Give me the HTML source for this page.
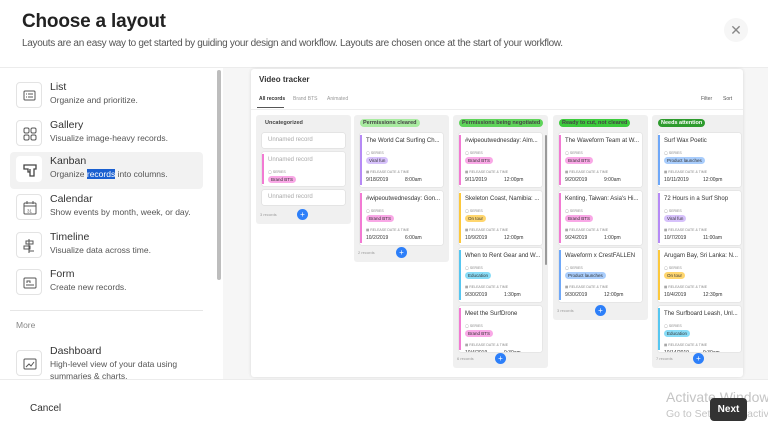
<!DOCTYPE html>
<html><head><meta charset="utf-8"><style>
*{box-sizing:border-box;margin:0;padding:0}
body{width:768px;height:433px;overflow:hidden;background:#fff;font-family:"Liberation Sans",sans-serif;color:#333;position:relative}
.a{position:absolute}
h1{position:absolute;left:22px;top:11px;font-size:19px;font-weight:bold;color:#222;letter-spacing:-0.2px}
.sub{left:22px;top:38px;font-size:10px;color:#555;letter-spacing:-0.3px;white-space:nowrap}
.item{position:absolute;left:10px;width:193px;height:37px;border-radius:4px}
.item .ic{position:absolute;left:6px;top:4px;width:26px;height:26px;border:1px solid #e3e3e3;border-radius:4px;background:#fff}
.item .t{position:absolute;left:40px;top:3px;font-size:10.5px;color:#333}
.item .d{position:absolute;left:40px;top:17px;font-size:8.5px;color:#555;white-space:nowrap}
.col{position:absolute;background:#f0f0f0;border-radius:3px;width:95px}
.ch{position:absolute;left:6px;top:4px;font-size:5.5px;font-weight:bold;color:#444;padding:1px 3px;border-radius:4px}
.card{position:absolute;left:6px;width:83px;background:#fff;border-radius:2px;box-shadow:0 0 1px rgba(0,0,0,.25);overflow:hidden}
.card .bar{position:absolute;left:0;top:2px;bottom:2px;width:2px}
.card .tt{position:absolute;left:6px;top:5px;font-size:6px;color:#333;white-space:nowrap}
.card .s{position:absolute;left:6px;top:18px;font-size:3.5px;color:#888}
.card .tag{position:absolute;left:6px;top:24px;font-size:4.5px;padding:1px 3px;border-radius:4px;color:#333}
.card .r{position:absolute;left:6px;top:37px;font-size:3.5px;color:#888}
.card .dt{position:absolute;left:6px;top:44px;font-size:5px;color:#333;white-space:nowrap}
.card .tm{position:absolute;left:45px;top:44px;font-size:5px;color:#333}
.foot{position:absolute;left:4px;font-size:4px;color:#999}
.plus{position:absolute;width:11px;height:11px;border-radius:50%;background:#2d7ff9;color:#fff;font-size:8px;line-height:11px;text-align:center}
.un{position:absolute;left:6px;width:83px;height:15px;background:#fff;border-radius:2px;box-shadow:0 0 1px rgba(0,0,0,.3);font-size:6px;color:#aaa;padding:4px 6px}
</style></head><body>
<h1>Choose a layout</h1>
<div class="a sub">Layouts are an easy way to get started by guiding your design and workflow. Layouts are chosen once at the start of your workflow.</div>
<div class="a" style="left:724px;top:18px;width:24px;height:24px;border-radius:50%;background:#f6f6f6;color:#888;font-size:14px;text-align:center;line-height:24px">✕</div>
<div class="a" style="left:0;top:67px;width:768px;height:1px;background:#ececec"></div>

<div class="item" style="top:78px"><div class="ic"><svg width="26" height="26"><rect x="7" y="8" width="11" height="9" rx="1" fill="none" stroke="#555"/><path d="M9 11h1M11 11h5M9 14h1M11 14h5" stroke="#555"/></svg></div><div class="t">List</div><div class="d">Organize and prioritize.</div></div>
<div class="item" style="top:116px"><div class="ic"><svg width="26" height="26"><g fill="none" stroke="#555"><rect x="7" y="7" width="5" height="5" rx="1.5"/><rect x="14" y="7" width="5" height="5" rx="1.5"/><rect x="7" y="14" width="5" height="5" rx="1.5"/><rect x="14" y="14" width="5" height="5" rx="1.5"/></g></svg></div><div class="t">Gallery</div><div class="d">Visualize image-heavy records.</div></div>
<div class="item" style="top:152px;background:#f2f2f2"><div class="ic" style="border-color:#fff"><svg width="26" height="26"><path d="M7 8h12v4h-2v7h-4v-4h-2v-3H7z M13 12v3" fill="none" stroke="#444" stroke-width="1.3"/></svg></div><div class="t">Kanban</div><div class="d">Organize <span style="background:#1a5fd0;color:#fff">records</span> into columns.</div></div>
<div class="item" style="top:190px"><div class="ic"><svg width="26" height="26"><rect x="7" y="8" width="12" height="11" rx="1" fill="none" stroke="#555"/><path d="M7 11h12M10 6v3M16 6v3" stroke="#555"/><text x="10" y="17.5" font-size="4.5" fill="#555">31</text></svg></div><div class="t">Calendar</div><div class="d">Show events by month, week, or day.</div></div>
<div class="item" style="top:228px"><div class="ic"><svg width="26" height="26"><path d="M12 6v14M9 8h7v3H9zM7 13h6v3H7zM12 18h5" fill="none" stroke="#555"/></svg></div><div class="t">Timeline</div><div class="d">Visualize data across time.</div></div>
<div class="item" style="top:265px"><div class="ic"><svg width="26" height="26"><rect x="7" y="8" width="12" height="10" rx="1" fill="none" stroke="#555"/><path d="M9 15h8M10 13v-2h3v2" fill="none" stroke="#555"/></svg></div><div class="t">Form</div><div class="d">Create new records.</div></div>
<div class="a" style="left:10px;top:310px;width:193px;height:1px;background:#e6e6e6"></div>
<div class="a" style="left:16px;top:320px;font-size:8.5px;color:#888">More</div>
<div class="item" style="top:342px"><div class="ic" style="top:8px"><svg width="26" height="26"><rect x="7" y="8" width="12" height="10" rx="1" fill="none" stroke="#555"/><path d="M9 16l3-3 2 2 3-4" fill="none" stroke="#555"/></svg></div><div class="t">Dashboard</div><div class="d">High-level view of your data using</div><div class="d" style="top:29px">summaries &amp; charts.</div></div>
<div class="a" style="left:217px;top:70px;width:4px;height:210px;background:#bdbdbd;border-radius:2px"></div>

<div class="a" style="left:223px;top:68px;width:545px;height:312px;background:#f6f6f6"></div>
<div class="a" style="left:251px;top:69px;width:492px;height:308px;background:#fff;border-radius:3px;box-shadow:0 0 3px rgba(0,0,0,.12);overflow:hidden">
 <div class="a" style="left:8px;top:6px;font-size:8px;font-weight:bold;color:#333">Video tracker</div>
 <div class="a" style="left:8px;top:27px;font-size:5px;color:#333;font-weight:bold">All records</div>
 <div class="a" style="left:42px;top:27px;font-size:5px;color:#999">Brand BTS</div>
 <div class="a" style="left:76px;top:27px;font-size:5px;color:#999">Animated</div>
 <div class="a" style="left:450px;top:27px;font-size:5px;color:#555">Filter</div>
 <div class="a" style="left:472px;top:27px;font-size:5px;color:#555">Sort</div>
 <div class="a" style="left:6px;top:38px;width:27px;height:1px;background:#555"></div>
 <div class="a" style="left:0;top:40px;width:492px;height:1px;background:#eee"></div>

 <div class="col" style="left:5px;top:46px;height:109px"><div class="ch">Uncategorized</div>
  <div class="un" style="top:18px">Unnamed record</div>
  <div class="card" style="top:37px;height:34px"><div class="bar" style="background:#f27ad3"></div><div class="tt" style="color:#aaa">Unnamed record</div><div class="s">◯ SERIES</div><div class="tag" style="background:#f9a8e6">Brand BTS</div></div>
  <div class="un" style="top:75px">Unnamed record</div>
  <div class="foot" style="top:97px">3 records</div><div class="plus" style="left:41px;top:94px">+</div></div>

 <div class="col" style="left:103px;top:46px;height:147px"><div class="ch" style="background:#a8eba0">Permissions cleared</div>
  <div class="card" style="top:18px;height:54px"><div class="bar" style="background:#b68af5"></div><div class="tt">The World Cat Surfing Ch...</div><div class="s">◯ SERIES</div><div class="tag" style="background:#d7c2fb">Viral fun</div><div class="r">▦ RELEASE DATE &amp; TIME</div><div class="dt">9/18/2019</div><div class="tm">8:00am</div></div>
  <div class="card" style="top:76px;height:54px"><div class="bar" style="background:#f27ad3"></div><div class="tt">#wipeoutwednesday: Gon...</div><div class="s">◯ SERIES</div><div class="tag" style="background:#f9a8e6">Brand BTS</div><div class="r">▦ RELEASE DATE &amp; TIME</div><div class="dt">10/2/2019</div><div class="tm">6:00am</div></div>
  <div class="foot" style="top:135px">2 records</div><div class="plus" style="left:42px;top:132px">+</div></div>

 <div class="col" style="left:202px;top:46px;height:253px"><div class="ch" style="background:#5fd45a">Permissions being negotiated</div>
  <div class="card" style="top:18px;height:54px"><div class="bar" style="background:#f27ad3"></div><div class="tt">#wipeoutwednesday: Alm...</div><div class="s">◯ SERIES</div><div class="tag" style="background:#f9a8e6">Brand BTS</div><div class="r">▦ RELEASE DATE &amp; TIME</div><div class="dt">9/11/2019</div><div class="tm">12:00pm</div></div>
  <div class="card" style="top:76px;height:54px"><div class="bar" style="background:#fcc83c"></div><div class="tt">Skeleton Coast, Namibia: ...</div><div class="s">◯ SERIES</div><div class="tag" style="background:#ffd66e">On tour</div><div class="r">▦ RELEASE DATE &amp; TIME</div><div class="dt">10/9/2019</div><div class="tm">12:00pm</div></div>
  <div class="card" style="top:133px;height:54px"><div class="bar" style="background:#56c6f0"></div><div class="tt">When to Rent Gear and W...</div><div class="s">◯ SERIES</div><div class="tag" style="background:#88dcf7">Education</div><div class="r">▦ RELEASE DATE &amp; TIME</div><div class="dt">9/30/2019</div><div class="tm">1:30pm</div></div>
  <div class="card" style="top:191px;height:46px"><div class="bar" style="background:#f27ad3"></div><div class="tt">Meet the SurfDrone</div><div class="s">◯ SERIES</div><div class="tag" style="background:#f9a8e6">Brand BTS</div><div class="r">▦ RELEASE DATE &amp; TIME</div><div class="dt">10/4/2019</div><div class="tm">9:30am</div></div>
  <div class="foot" style="top:241px">6 records</div><div class="plus" style="left:42px;top:238px">+</div>
  <div class="a" style="left:92px;top:20px;width:2px;height:130px;background:#999;border-radius:1px"></div></div>

 <div class="col" style="left:302px;top:46px;height:205px"><div class="ch" style="background:#3ccb3c">Ready to cut, not cleared</div>
  <div class="card" style="top:18px;height:54px"><div class="bar" style="background:#f27ad3"></div><div class="tt">The Waveform Team at W...</div><div class="s">◯ SERIES</div><div class="tag" style="background:#f9a8e6">Brand BTS</div><div class="r">▦ RELEASE DATE &amp; TIME</div><div class="dt">9/20/2019</div><div class="tm">9:00am</div></div>
  <div class="card" style="top:76px;height:54px"><div class="bar" style="background:#f27ad3"></div><div class="tt">Kenting, Taiwan: Asia's Hi...</div><div class="s">◯ SERIES</div><div class="tag" style="background:#f9a8e6">Brand BTS</div><div class="r">▦ RELEASE DATE &amp; TIME</div><div class="dt">9/24/2019</div><div class="tm">1:00pm</div></div>
  <div class="card" style="top:133px;height:54px"><div class="bar" style="background:#6fa8f8"></div><div class="tt">Waveform x CrestFALLEN</div><div class="s">◯ SERIES</div><div class="tag" style="background:#a9cdfc">Product launches</div><div class="r">▦ RELEASE DATE &amp; TIME</div><div class="dt">9/30/2019</div><div class="tm">12:00pm</div></div>
  <div class="foot" style="top:193px">3 records</div><div class="plus" style="left:42px;top:190px">+</div></div>

 <div class="col" style="left:401px;top:46px;height:253px"><div class="ch" style="background:#2e9b2e;color:#fff">Needs attention</div>
  <div class="card" style="top:18px;height:54px"><div class="bar" style="background:#6fa8f8"></div><div class="tt">Surf Wax Poetic</div><div class="s">◯ SERIES</div><div class="tag" style="background:#a9cdfc">Product launches</div><div class="r">▦ RELEASE DATE &amp; TIME</div><div class="dt">10/11/2019</div><div class="tm">12:00pm</div></div>
  <div class="card" style="top:76px;height:54px"><div class="bar" style="background:#b68af5"></div><div class="tt">72 Hours in a Surf Shop</div><div class="s">◯ SERIES</div><div class="tag" style="background:#d7c2fb">Viral fun</div><div class="r">▦ RELEASE DATE &amp; TIME</div><div class="dt">10/7/2019</div><div class="tm">11:00am</div></div>
  <div class="card" style="top:133px;height:54px"><div class="bar" style="background:#fcc83c"></div><div class="tt">Arugam Bay, Sri Lanka: N...</div><div class="s">◯ SERIES</div><div class="tag" style="background:#ffd66e">On tour</div><div class="r">▦ RELEASE DATE &amp; TIME</div><div class="dt">10/4/2019</div><div class="tm">12:30pm</div></div>
  <div class="card" style="top:191px;height:46px"><div class="bar" style="background:#56c6f0"></div><div class="tt">The Surfboard Leash, Unl...</div><div class="s">◯ SERIES</div><div class="tag" style="background:#88dcf7">Education</div><div class="r">▦ RELEASE DATE &amp; TIME</div><div class="dt">10/14/2019</div><div class="tm">9:30am</div></div>
  <div class="foot" style="top:241px">7 records</div><div class="plus" style="left:41px;top:238px">+</div></div>
</div>

<div class="a" style="left:0;top:379px;width:768px;height:1px;background:#ececec"></div>
<div class="a" style="left:30px;top:403px;font-size:10px;color:#333">Cancel</div>
<div class="a" style="left:666px;top:389px;font-size:14px;color:#c4c4c4;white-space:nowrap">Activate Windows</div>
<div class="a" style="left:666px;top:408px;font-size:10.5px;color:#c4c4c4;white-space:nowrap">Go to Settings to activ</div>
<div class="a" style="left:710px;top:398px;width:37px;height:23px;background:#333;border-radius:4px;color:#fff;font-size:10px;font-weight:bold;text-align:center;line-height:23px">Next</div>
</body></html>
